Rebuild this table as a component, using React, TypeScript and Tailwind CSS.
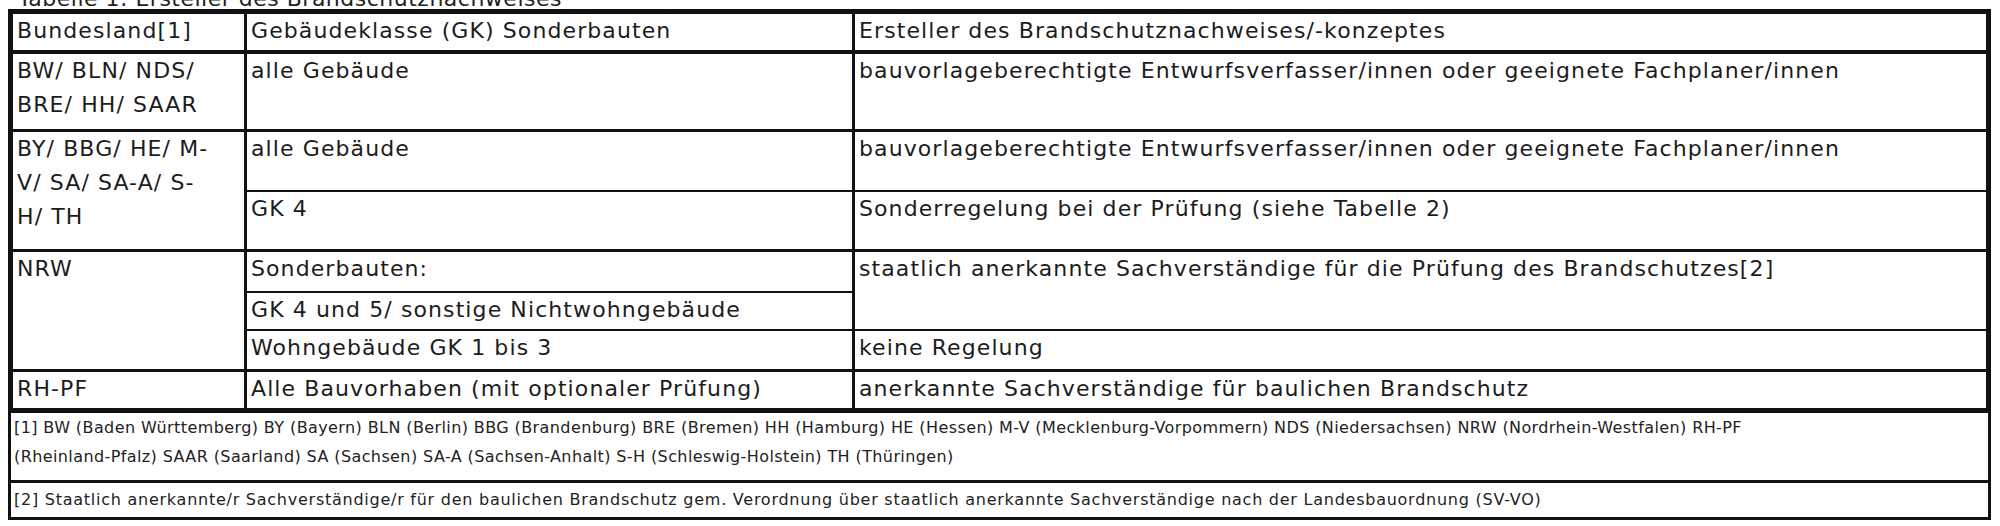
const cell = "border-2 border-[#111] align-top pl-[4px] pr-[4px] pt-0 pb-0";

export default function App() {
  return (
    <div
      className="w-[2000px] h-[526px] bg-white text-[#1c1c1c] overflow-hidden"
      style={{ fontFamily: "'DejaVu Sans', 'Open Sans', sans-serif" }}
    >
      {/* Caption, cut off at the top edge */}
      <div className="h-[9px] overflow-hidden pl-[18px]">
        <p className="-mt-[12px] text-[22px] leading-[22px] tracking-[0.5px] text-[#222]">
          Tabelle 1: Ersteller des Brandschutznachweises
        </p>
      </div>

      <div className="pl-[8px]">
        <table className="table-fixed border-collapse w-[1983px] border-[5px] border-[#111] text-[22px] leading-[34px] tracking-[1.1px]">
          <colgroup>
            <col className="w-[235px]" />
            <col className="w-[608px]" />
            <col />
          </colgroup>
          <tbody>
            {/* Header */}
            <tr className="h-[40px] border-b-4 border-[#111]">
              <td className={cell + " border-r-[3px]"}>Bundesland[1]</td>
              <td className={cell + " border-r-[3px]"}>Gebäudeklasse (GK) Sonderbauten</td>
              <td className={cell}>Ersteller des Brandschutznachweises/-konzeptes</td>
            </tr>

            {/* BW / BLN / NDS */}
            <tr className="h-[79px] border-b-[3px] border-[#111]">
              <td className={cell + " border-r-[3px]"}>
                BW/ BLN/ NDS/
                <br />
                BRE/ HH/ SAAR
              </td>
              <td className={cell + " border-r-[3px]"}>alle Gebäude</td>
              <td className={cell}>
                bauvorlageberechtigte Entwurfsverfasser/innen oder geeignete Fachplaner/innen
              </td>
            </tr>

            {/* BY / BBG / ... */}
            <tr className="h-[60px]">
              <td rowSpan={2} className={cell + " border-r-[3px] border-b-[3px]"}>
                BY/ BBG/ HE/ M-
                <br />
                V/ SA/ SA-A/ S-
                <br />
                H/ TH
              </td>
              <td className={cell + " border-r-[3px]"}>alle Gebäude</td>
              <td className={cell}>
                bauvorlageberechtigte Entwurfsverfasser/innen oder geeignete Fachplaner/innen
              </td>
            </tr>
            <tr className="h-[60px] border-b-[3px] border-[#111]">
              <td className={cell + " border-r-[3px]"}>GK 4</td>
              <td className={cell}>Sonderregelung bei der Prüfung (siehe Tabelle 2)</td>
            </tr>

            {/* NRW */}
            <tr className="h-[41px]">
              <td rowSpan={3} className={cell + " border-r-[3px] border-b-[3px]"}>NRW</td>
              <td className={cell + " border-r-[3px]"}>Sonderbauten:</td>
              <td rowSpan={2} className={cell}>
                staatlich anerkannte Sachverständige für die Prüfung des Brandschutzes[2]
              </td>
            </tr>
            <tr className="h-[38px]">
              <td className={cell + " border-r-[3px]"}>GK 4 und 5/ sonstige Nichtwohngebäude</td>
            </tr>
            <tr className="h-[41px] border-b-[3px] border-[#111]">
              <td className={cell + " border-r-[3px]"}>Wohngebäude GK 1 bis 3</td>
              <td className={cell + " align-bottom"}>keine Regelung</td>
            </tr>

            {/* RH-PF */}
            <tr className="h-[40px]">
              <td className={cell + " border-r-[3px]"}>RH-PF</td>
              <td className={cell + " border-r-[3px]"}>Alle Bauvorhaben (mit optionaler Prüfung)</td>
              <td className={cell}>anerkannte Sachverständige für baulichen Brandschutz</td>
            </tr>
          </tbody>
        </table>

        {/* Footnotes */}
        <div className="w-[1983px] border-x-[3px] border-b-[3px] border-[#111] text-[16px] text-[#222]">
          <div className="h-[70px] border-b-[3px] border-[#111] pl-[3px] leading-[29px] tracking-[0.4px]">
            [1] BW (Baden Württemberg) BY (Bayern) BLN (Berlin) BBG (Brandenburg) BRE (Bremen) HH (Hamburg) HE (Hessen) M-V (Mecklenburg-Vorpommern) NDS (Niedersachsen) NRW (Nordrhein-Westfalen) RH-PF
            <br />
            (Rheinland-Pfalz) SAAR (Saarland) SA (Sachsen) SA-A (Sachsen-Anhalt) S-H (Schleswig-Holstein) TH (Thüringen)
          </div>
          <div className="h-[34px] pl-[3px] leading-[34px] tracking-[0.75px]">
            [2] Staatlich anerkannte/r Sachverständige/r für den baulichen Brandschutz gem. Verordnung über staatlich anerkannte Sachverständige nach der Landesbauordnung (SV-VO)
          </div>
        </div>
      </div>
    </div>
  );
}
